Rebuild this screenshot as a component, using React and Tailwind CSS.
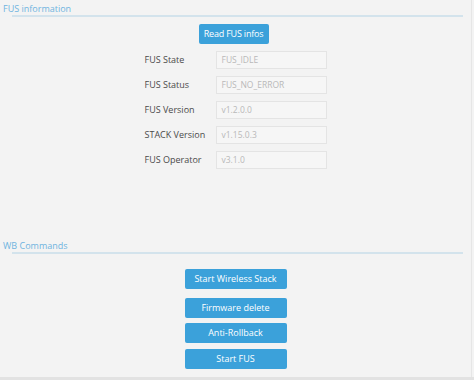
import React from 'react';

const font = { fontFamily: '"Open Sans", "Noto Sans", sans-serif' };

function SectionTitle({ children }) {
  return (
    <div>
      <div className="h-[12px] pl-[3px] text-[9px] leading-[12px] text-[#6fb3df]">{children}</div>
      <div className="ml-[12px] mr-[8px] h-[2px] bg-[#d3e3ec]" />
    </div>
  );
}

function BlueButton({ children, className = '' }) {
  return (
    <button className={'flex items-center justify-center rounded-[2px] bg-[#3ba1da] text-[9px] text-white ' + className}>
      {children}
    </button>
  );
}

const rows = [
  ['FUS State', 'FUS_IDLE'],
  ['FUS Status', 'FUS_NO_ERROR'],
  ['FUS Version', 'v1.2.0.0'],
  ['STACK Version', 'v1.15.0.3'],
  ['FUS Operator', 'v3.1.0'],
];

export default function App() {
  return (
    <div style={font} className="flex h-[380px] w-[474px] flex-col bg-[#f3f3f3]">
      <div className="mr-[2px] flex flex-1 border-r border-[#e6e6e6]">
        <div className="flex-1 pt-[3px]">
          <SectionTitle>FUS information</SectionTitle>

          <div className="mt-[7px] flex justify-center">
            <BlueButton className="mr-[4px] h-[20px] w-[70px] tracking-[-0.2px]">Read FUS infos</BlueButton>
          </div>

          <div className="mt-[7px] flex flex-col items-center gap-[7px]">
            {rows.map(([label, value]) => (
              <div key={label} className="flex h-[18px] items-center">
                <div className="w-[71px] text-[9px] text-[#4a4a4a]">{label}</div>
                <div className="flex h-[18px] w-[111px] items-center border border-[#e4e4e4] bg-[#f6f6f6] px-[5px] text-[8.5px] text-[#b9b9b9]">
                  {value}
                </div>
              </div>
            ))}
          </div>

          <div className="mt-[71px]">
            <SectionTitle>WB Commands</SectionTitle>
          </div>

          <div className="mt-[15px] flex flex-col items-center">
            <BlueButton className="h-[20px] w-[102px]">Start Wireless Stack</BlueButton>
            <BlueButton className="mt-[9px] h-[20px] w-[102px]">Firmware delete</BlueButton>
            <BlueButton className="mt-[5px] h-[20px] w-[102px]">Anti-Rollback</BlueButton>
            <BlueButton className="mt-[6px] h-[20px] w-[102px]">Start FUS</BlueButton>
          </div>
        </div>
      </div>
      <div className="h-[3px] bg-[#e2e2e2]" />
    </div>
  );
}
